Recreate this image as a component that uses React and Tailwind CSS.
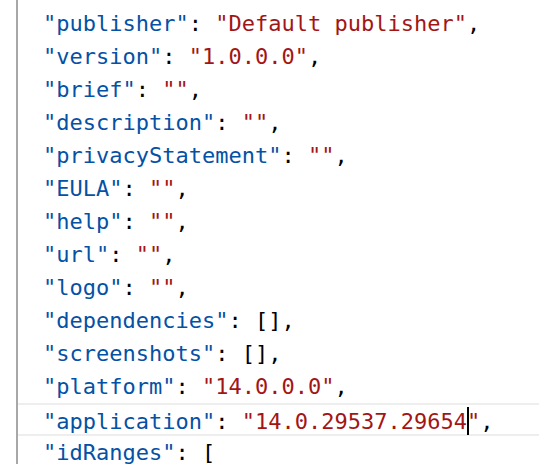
const lines = [
  { key: "publisher", value: "\"Default publisher\"" },
  { key: "version", value: "\"1.0.0.0\"" },
  { key: "brief", value: "\"\"" },
  { key: "description", value: "\"\"" },
  { key: "privacyStatement", value: "\"\"" },
  { key: "EULA", value: "\"\"" },
  { key: "help", value: "\"\"" },
  { key: "url", value: "\"\"" },
  { key: "logo", value: "\"\"" },
  { key: "dependencies", value: "[]", plain: true },
  { key: "screenshots", value: "[]", plain: true },
  { key: "platform", value: "\"14.0.0.0\"" },
  { key: "application", value: "\"14.0.29537.29654\"", current: true },
  { key: "idRanges", value: "[", plain: true, last: true },
];

function Line({ item }) {
  const base = "h-[33px] leading-[33px] whitespace-pre pl-[25px]";
  return (
    <div
      className={
        item.current
          ? `${base} border-y-2 border-[#eeeeee] leading-[29px]`
          : base
      }
    >
      <span className="text-[#0451a5]">"{item.key}"</span>
      <span className="text-black">: </span>
      {item.plain ? (
        <span className="text-black">{item.value}</span>
      ) : item.current ? (
        <span className="text-[#a31515]">
          "14.0.29537.29654
          <span className="relative">
            <span className="absolute left-[0px] top-[-2px] w-[2px] h-[28px] bg-black" />
          </span>
          "
        </span>
      ) : (
        <span className="text-[#a31515]">{item.value}</span>
      )}
      {!item.last && <span className="text-black">,</span>}
    </div>
  );
}

export default function App() {
  return (
    <div className="w-[539px] h-[464px] overflow-hidden bg-white flex font-['DejaVu_Sans_Mono','Liberation_Mono',monospace] text-[22px]">
      <div className="w-[16px] shrink-0" />
      <div className="flex-1 border-l-2 border-[#a8a8a8]">
        <div className="pt-[7px]">
          {lines.map((item) => (
            <Line key={item.key} item={item} />
          ))}
        </div>
      </div>
    </div>
  );
}
